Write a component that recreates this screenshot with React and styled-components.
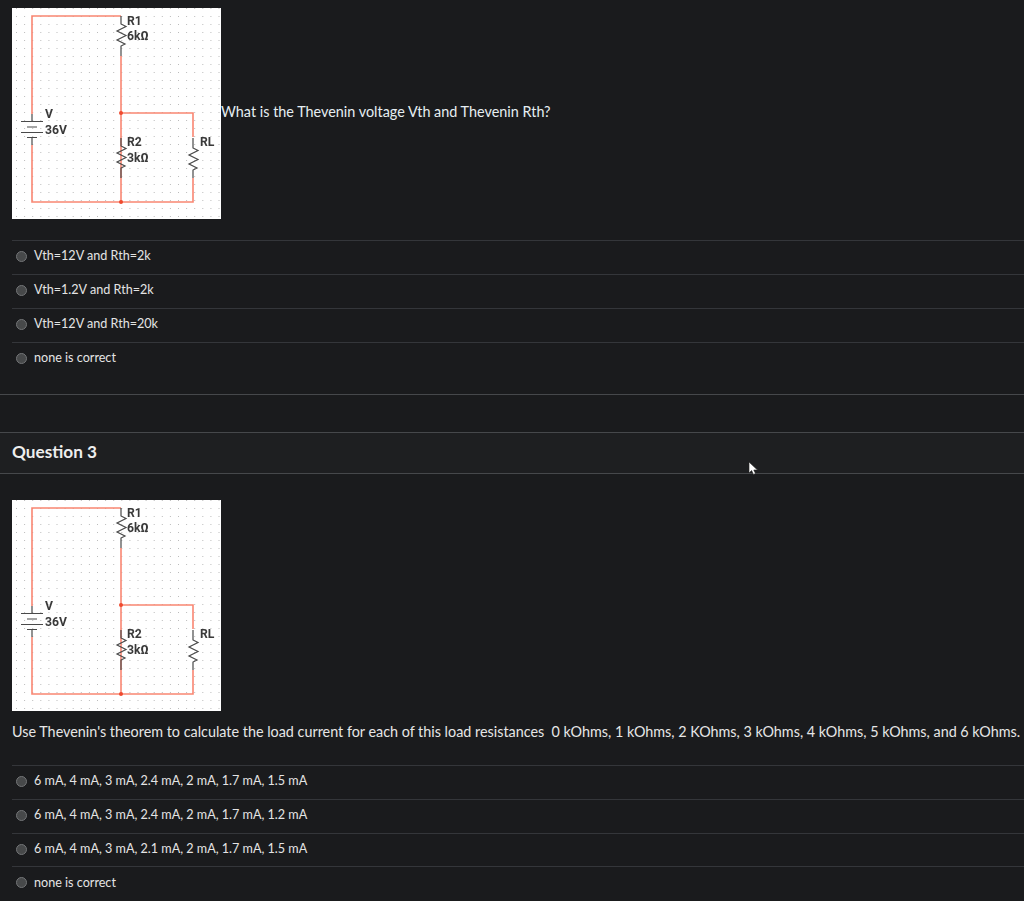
import React from 'react';
import styled, { createGlobalStyle } from 'styled-components';

const Global = createGlobalStyle`
  html, body { margin: 0; padding: 0; background: #1a1b1d; }
  body { font-family: Lato, "Liberation Sans", sans-serif; color: #eaeaea; }
`;
const Page = styled.div`
  position: relative;
  width: 1024px;
  height: 901px;
  overflow: hidden;
  background: #1a1b1d;
`;
const TopQuestion = styled.div`
  display: flex;
  align-items: center;
  padding: 8px 0 0 12px;
  height: 211px;
`;
const QuestionText = styled.div`
  font-size: 14.4px;
  line-height: 20px;
  color: #e6eef2;
  white-space: nowrap;
  margin-top: -3px;
`;
const Answers = styled.div`
  margin-left: 12px;
  margin-top: ${p => p.$top}px;
`;
const Row = styled.div`
  display: flex;
  align-items: center;
  height: ${p => p.$h || 33}px;
  border-top: 1px solid #34363a;
  padding-left: 4px;
  gap: 7px;
  font-size: 12.6px;
  color: #e4e4e4;
  white-space: nowrap;
`;
const Radio = styled.span`
  width: 9px;
  height: 9px;
  margin-bottom: 2px;
  border: 1px solid #737577;
  border-radius: 50%;
  background: #47494a;
  flex: none;
`;
const AnswerText = styled.span`
  margin-bottom: ${p => p.$mb}px;
`;
const Rule = styled.div`
  height: 1px;
  background: #46484b;
  margin-top: 18px;
`;
const Header = styled.div`
  margin-top: 37px;
  height: 40px;
  display: flex;
  align-items: center;
  padding-left: 12px;
  background: #1e1f21;
  border-top: 1px solid #46484b;
  border-bottom: 1px solid #46484b;
  font-size: 17.2px;
  font-weight: 700;
  color: #eeeeee;
`;
const HeaderTitle = styled.span`
  margin-bottom: 4px;
`;
const Figure = styled.div`
  margin: 26px 0 0 12px;
  height: 211px;
`;
const Wide = styled.div`
  margin: 11px 0 0 12px;
  font-size: 14.37px;
  line-height: 20px;
  color: #e6e6e6;
  white-space: nowrap;
`;
const Cursor = styled.svg`
  position: absolute;
  left: 748px;
  top: 461px;
`;
const Circuit = styled.svg`
  display: block;
  background: #fff;
`;
const Soft = styled.g`
  filter: blur(0.3px);
`;

const Label = ({ x, y, children }) => (
  <text x={x} y={y} fontFamily="Roboto, sans-serif" fontSize="12.2" fontWeight="700" fill="#3a3a3a">{children}</text>
);

const resistor = (x, y0, zigStart) => {
  const z = y0 + zigStart;
  return `M${x} ${y0}V${z}L${x + 5} ${z + 2.500}L${x - 4} ${z + 7}L${x + 5} ${z + 11.500}L${x - 4} ${z + 16}L${x + 4} ${z + 20}L${x} ${z + 22}V${y0 + 40}`;
};

const dots = [];
for (let x = 4; x < 209; x += 8.1) for (let y = 0; y < 211; y += 8) dots.push([x, y]);

const CircuitImage = () => (
  <Circuit width="209" height="211" viewBox="0 0 209 211">
    <Soft>
      {dots.map(([x, y]) => <rect key={`${x}-${y}`} x={x} y={y} width="1" height="1" fill="#bcbcbc" />)}
      <g fill="none" stroke="#f98672" strokeWidth="1.6">
        <path d="M20 106V8H109" />
        <path d="M109 48V193" />
        <path d="M109 105H181V129" />
        <path d="M181 170V194H20V137" />
      </g>
      <circle cx="109" cy="105" r="2" fill="#ef4a2f" />
      <circle cx="109" cy="194" r="2" fill="#ef4a2f" />
      <g fill="none" stroke="#4a4a4a" strokeWidth="1.2">
        <path d={resistor(109, 8, 8)} />
        <path d={resistor(109, 130, 8)} />
        <path d={resistor(181, 130, 10)} />
        <path d="M20 106V113M9 113.500H31M15 119H25M9 124.500H31M15 129.500H25M20 129.500V137" />
      </g>
      <Label x={33} y={110}>V</Label>
      <Label x={33} y={126}>36V</Label>
      <Label x={115} y={17}>R1</Label>
      <Label x={115} y={32}>6kΩ</Label>
      <Label x={115} y={138}>R2</Label>
      <Label x={115} y={154}>3kΩ</Label>
      <Label x={188} y={138}>RL</Label>
    </Soft>
  </Circuit>
);

const AnswerList = ({ top, items, heights, offsets }) => (
  <Answers $top={top}>
    {items.map((t, i) => (
      <Row key={i} $h={heights && heights[i]}>
        <Radio />
        <AnswerText $mb={offsets ? offsets[i] : 4}>{t}</AnswerText>
      </Row>
    ))}
  </Answers>
);

export default function App() {
  return (
    <Page>
      <Global />
      <TopQuestion>
        <CircuitImage />
        <QuestionText>What is the Thevenin voltage Vth and Thevenin Rth?</QuestionText>
      </TopQuestion>
      <AnswerList top={21} items={['Vth=12V and Rth=2k', 'Vth=1.2V and Rth=2k', 'Vth=12V and Rth=20k', 'none is correct']} />
      <Rule />
      <Header><HeaderTitle>Question 3</HeaderTitle></Header>
      <Figure><CircuitImage /></Figure>
      <Wide>Use Thevenin's theorem to calculate the load current for each of this load resistances&nbsp; 0 kOhms, 1 kOhms, 2 KOhms, 3 kOhms, 4 kOhms, 5 kOhms, and 6 kOhms.</Wide>
      <AnswerList
        top={23}
        heights={[33, 33, 32, 33]}
        offsets={[4, 4, 4, 2]}
        items={['6 mA, 4 mA, 3 mA, 2.4 mA, 2 mA, 1.7 mA, 1.5 mA', '6 mA, 4 mA, 3 mA, 2.4 mA, 2 mA, 1.7 mA, 1.2 mA', '6 mA, 4 mA, 3 mA, 2.1 mA, 2 mA, 1.7 mA, 1.5 mA', 'none is correct']}
      />
      <Cursor width="11" height="15" viewBox="0 0 11 15">
        <path d="M1 1L1 12L3.600 9.500L5.500 13.500L7.500 12.500L5.800 9L9.500 9Z" fill="#fff" stroke="#222" strokeWidth="0.6" />
      </Cursor>
    </Page>
  );
}
